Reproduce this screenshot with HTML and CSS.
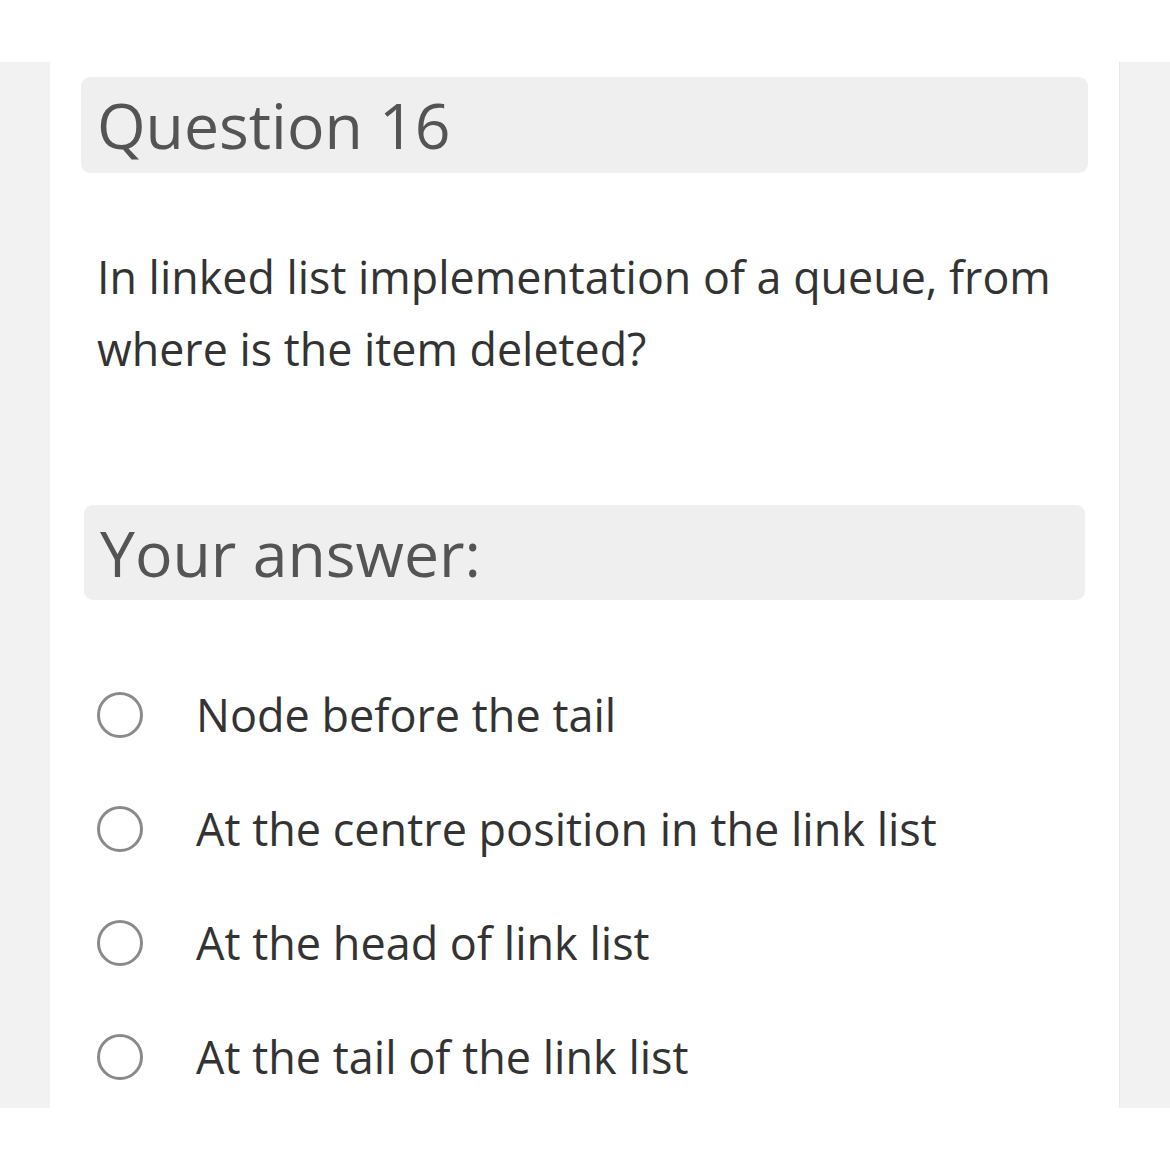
FILE: index.html
```html
<!DOCTYPE html>
<html>
<head>
<meta charset="utf-8">
<link rel="stylesheet" href="styles.css">
</head>
<body>
<div class="page">
  <div class="side"></div>
  <main class="card">
    <div class="qhead">Question 16</div>
    <p class="qtext">In linked list implementation of a queue, from where is the item deleted?</p>
    <div class="ahead">Your answer:</div>
    <ul class="options">
      <li class="option"><span class="radio"></span><span class="label">Node before the tail</span></li>
      <li class="option"><span class="radio"></span><span class="label">At the centre position in the link list</span></li>
      <li class="option"><span class="radio"></span><span class="label">At the head of link list</span></li>
      <li class="option"><span class="radio"></span><span class="label">At the tail of the link list</span></li>
    </ul>
  </main>
  <div class="side side-right"></div>
</div>
</body>
</html>
```
FILE: styles.css
```css
html, body {
  margin: 0;
  padding: 0;
  background: #ffffff;
}
body {
  font-family: "Open Sans", "Noto Sans", sans-serif;
}
.page {
  margin-top: 62px;
  height: 1046px;
  display: flex;
}
.side {
  width: 50px;
  background: #f2f2f2;
  flex: none;
}
.side-right {
  width: 51px;
  border-left: 1px solid #e9e9e9;
  box-sizing: border-box;
}
.card {
  flex: 1;
  background: #ffffff;
  padding: 15px 31px 0 31px;
  box-sizing: border-box;
}
.qhead {
  background: #efefef;
  border-radius: 9px;
  height: 96px;
  line-height: 96px;
  font-size: 62.5px;
  color: #545454;
  padding-left: 16px;
}
.qtext {
  margin: 68px 0 0 0;
  padding: 0 16px;
  font-size: 44.8px;
  line-height: 72px;
  color: #333333;
}
.ahead {
  margin: 120px 3px 0 3px;
  background: #efefef;
  border-radius: 9px;
  height: 95px;
  line-height: 95px;
  font-size: 62.5px;
  color: #545454;
  padding-left: 16px;
}
.options {
  list-style: none;
  margin: 58px 0 0 0;
  padding: 0 0 0 16px;
}
.option {
  display: flex;
  align-items: center;
  height: 114px;
}
.radio {
  width: 46px;
  height: 46px;
  box-sizing: border-box;
  border: 3px solid #8a8a8a;
  border-radius: 50%;
  flex: none;
}
.label {
  margin-left: 53px;
  font-size: 45px;
  line-height: 114px;
  color: #333333;
}
```
